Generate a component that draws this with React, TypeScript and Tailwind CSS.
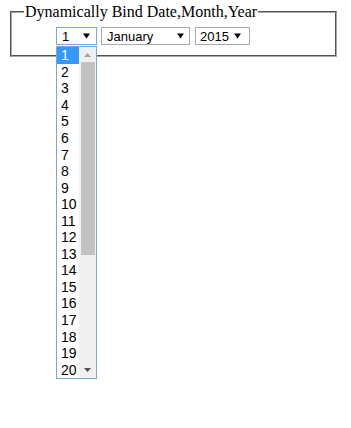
import React from "react";

const days = Array.from({ length: 20 }, (_, i) => i + 1);

function Arrow() {
	return (
		<svg width="7" height="6" viewBox="0 0 7 6" className="shrink-0">
			<path d="M0 0.5 L7 0.5 L3.5 5.5 Z" fill="#000" />
		</svg>
	);
}

function FakeSelect({ label, width, pad, focused }: { label: string; width: string; pad: string; focused?: boolean }) {
	return (
		<div
			className={`${width} ${pad} h-[18px] flex items-center justify-between bg-white border ${
				focused ? "border-[#7aa7d8]" : "border-[#a9a9a9]"
			}`}
		>
			<span className="text-[13px] leading-none text-black">{label}</span>
			<Arrow />
		</div>
	);
}

export default function App() {
	return (
		<div className="w-[351px] h-[428px] bg-white pt-[3px] font-['Liberation_Sans',Arial,sans-serif]">
			<fieldset className="ml-[10px] w-[327px] border-2 [border-style:groove] border-[#a8a8a8] pl-[12px] pb-[10px]">
				<legend className="px-[1px] text-[16px] leading-[18px] text-black font-['Liberation_Serif','Times_New_Roman',serif]">
					Dynamically Bind Date,Month,Year
				</legend>
				<div className="ml-[32px] mt-[6px] flex items-center gap-[4px]">
					<div className="relative">
						<FakeSelect label="1" width="w-[41px]" pad="pl-[5px] pr-[6px]" focused />
						{/* open dropdown list */}
						<div className="absolute left-0 top-[19px] w-[41px] h-[333px] bg-white border border-[#7aa7d8] flex z-10">
							<ul className="flex-1 flex flex-col">
								{days.map(d => (
									<li
										key={d}
										className={`h-[16.55px] flex items-center pl-[4px] text-[14px] leading-none ${
											d === 1 ? "bg-[#3399ff] text-white" : "text-black"
										}`}
									>
										{d}
									</li>
								))}
							</ul>
							<div className="w-[17px] bg-[#f0f0f0] flex flex-col items-center">
								<div className="h-[15px] flex items-center justify-center">
									<svg width="7" height="4" viewBox="0 0 7 4">
										<path d="M0 4 L3.5 0 L7 4 Z" fill="#a3a3a3" />
									</svg>
								</div>
								<div className="w-[14px] h-[193px] bg-[#c1c1c1]" />
								<div className="flex-1" />
								<div className="h-[16px] flex items-center justify-center">
									<svg width="7" height="4" viewBox="0 0 7 4">
										<path d="M0 0 L7 0 L3.5 4 Z" fill="#505050" />
									</svg>
								</div>
							</div>
						</div>
					</div>
					<FakeSelect label="January" width="w-[89px]" pad="pl-[5px] pr-[5px]" />
					<FakeSelect label="2015" width="w-[55px] ml-[1px]" pad="pl-[4px] pr-[8px]" />
				</div>
			</fieldset>
		</div>
	);
}
